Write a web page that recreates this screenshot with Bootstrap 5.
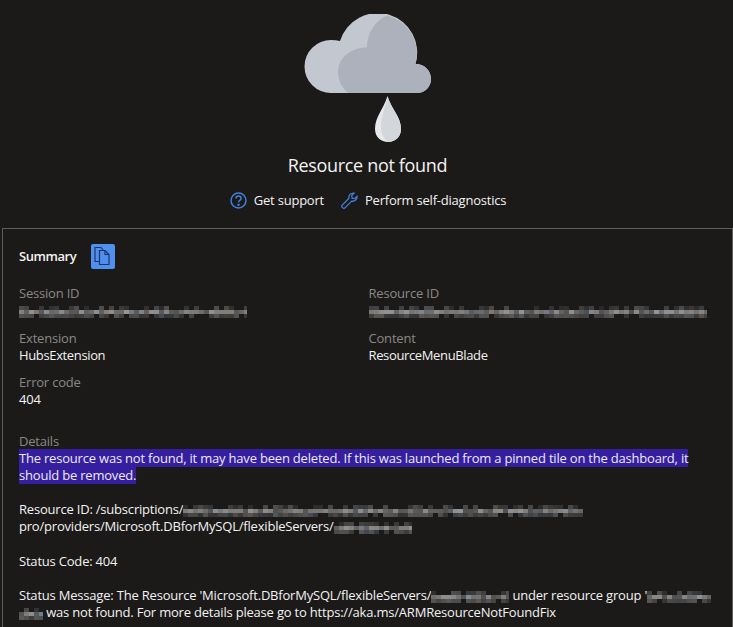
<!DOCTYPE html>
<html lang="en"><head><meta charset="utf-8"><title>Resource not found</title>
<link rel="stylesheet" href="https://cdn.jsdelivr.net/npm/bootstrap@5.3.0/dist/css/bootstrap.min.css">
<style>
html,body{height:627px;overflow:hidden}
body{background:#1b1a19;color:#f3f2f1;font-family:"Open Sans","Noto Sans",sans-serif;font-size:13px;line-height:17px;letter-spacing:-.2px}
.hero{height:228px;padding-top:14px}
.cloudicon{display:block;width:127px;height:128px;margin-left:2px}
.hero-title{font-size:18px;line-height:26px;font-weight:400;margin:10px 0 0 2px;letter-spacing:-.33px}
.hero-links{margin-top:14px;gap:17px;margin-left:3px;letter-spacing:-.22px}
.hero-links a{color:#f3f2f1;text-decoration:none;gap:7px}
.panel{border:1px solid #605e5c;margin-left:2px;padding:15px 16px 0;height:420px}
.sum-title{font-weight:600;letter-spacing:-.45px}
.copybtn{width:24px;height:25px;background:#4f8ff0;border:0;border-radius:2px;padding:0;margin-left:15px}
.lbl{color:#8a8886}
.pair{height:44.5px}
.val-narrow{letter-spacing:-.36px}
.mosaic{display:inline-block;vertical-align:middle}
.selbg{background:#351f9e;color:#eceaf6}
.colgap{width:349.5px;flex:none}
.detail-head{margin-top:14.5px}
p.msg{margin:0 0 17.4px}
</style></head><body>
<div class="hero d-flex flex-column align-items-center">
<svg class="cloudicon" viewBox="304 14 127 128" aria-label="cloud">
<path d="M331 93A26.500 26.500 0 0 1 331 40Q336 40 340 41A39 39 0 0 1 415.500 64A15 15 0 0 1 431 79A14 14 0 0 1 417 93Z" fill="#c3c7d0"/>
<path d="M348 93C342 88 338 80 338 72C338 58 351 47.500 367 47.500C367 33 375 21 387 15.500A39 39 0 0 1 415.500 64A15 15 0 0 1 431 79A14 14 0 0 1 417 93Z" fill="#adb1bc"/>
<path d="M387.500 96C383 110 375 117 375 129C375 137 381 142 388 142C395 142 401 137 401 129C401 117 392 110 387.500 96Z" fill="#e6e8ec"/>
<path d="M387.500 97C385 108 381 117 381 127C381 134 384 139 388 142C395 142 401 137 401 129C401 117 392 110 387.500 97Z" fill="#d3d6db"/>
</svg>
<h1 class="hero-title">Resource not found</h1>
<div class="hero-links d-flex">
<a href="#" class="d-flex align-items-center"><svg width="17" height="17" viewBox="0 0 17 17" fill="none" stroke="#3f80dc" stroke-width="1.500"><circle cx="8.500" cy="8.500" r="7.500"/><path d="M6 6.600c0-1.500 1.100-2.500 2.500-2.500s2.600 1 2.600 2.300c0 1.900-2.600 1.900-2.600 3.800"/><circle cx="8.500" cy="12.700" r=".5" fill="#3f80dc"/></svg>Get support</a>
<a href="#" class="d-flex align-items-center"><svg width="17" height="17" viewBox="0 0 17 17" fill="none" stroke="#3f80dc" stroke-width="1.300"><path d="M1 13.400 8 6.300C7.300 3.400 9.800.6 13 1.100L10.700 3.500l.4 2.600 2.600.5L16 4.300c.4 3-2.300 5.500-5.300 4.800l-7 7c-1.200 1-3.700-1.400-2.700-2.700Z"/></svg>Perform self-diagnostics</a>
</div>
</div>
<div class="panel">
<div class="d-flex align-items-center"><span class="sum-title">Summary</span>
<button class="copybtn" aria-label="Copy"><svg class="d-block" width="24" height="25" viewBox="0 0 24 25" fill="none" stroke="#1f3560" stroke-width="1.200"><path d="M8 17.500H4V3.500h6L12 6"/><path d="M8.500 6.500h5.500l4 4v10H8.500Z"/><path d="M14 6.500v4h4"/></svg></button></div>
<div class="d-flex mt-3">
<div class="colgap"><div class="pair"><div class="lbl">Session ID</div><span class="mosaic" data-w="228"></span></div>
<div class="pair"><div class="lbl">Extension</div><div class="val-narrow">HubsExtension</div></div>
<div class="pair"><div class="lbl">Error code</div><div>404</div></div></div>
<div class="flex-grow-1"><div class="pair"><div class="lbl">Resource ID</div><span class="mosaic" data-w="338"></span></div>
<div class="pair"><div class="lbl">Content</div><div class="val-narrow">ResourceMenuBlade</div></div></div>
</div>
<div class="lbl detail-head">Details</div>
<p class="msg"><span class="selbg">The resource was not found, it may have been deleted. If this was launched from a pinned tile on the dashboard, it should be removed.</span></p>
<p class="msg">Resource ID: /subscriptions/<span class="mosaic" data-w="400"></span><br>pro/providers/Microsoft.DBforMySQL/flexibleServers/<span class="mosaic" data-w="78"></span></p>
<p class="msg">Status Code: 404</p>
<p class="msg">Status Message: The Resource 'Microsoft.DBforMySQL/flexibleServers/<span class="mosaic" data-w="78"></span> under resource group '<span class="mosaic" data-w="64"></span><br><span class="mosaic" data-w="24"></span> was not found. For more details please go to https://aka.ms/ARMResourceNotFoundFix</p>
</div>
<script>
var seed=7;function r(){seed=(seed*16807)%2147483647;return seed/2147483647}
document.querySelectorAll('.mosaic').forEach(function(m){var w=+m.dataset.w,h=12,s='';for(var x=0;x<w;x+=5){for(var y=0;y<h;y+=4){var keep=y==4?1:(y==0?.55:.85);if(r()<keep){var b=y==4?78:(y==0?42:52),g=Math.round(b+r()*(y==4?70:36)),t=Math.round(r()*10-5);s+='<rect x="'+x+'" y="'+y+'" width="5" height="4" fill="rgb('+(g+t)+','+g+','+(g-t)+')"/>'}}}
m.innerHTML='<svg width="'+w+'" height="'+h+'" class="d-block" aria-hidden="true">'+s+'</svg>'});
</script>
<script src="https://cdn.jsdelivr.net/npm/bootstrap@5.3.0/dist/js/bootstrap.bundle.min.js"></script>
</body></html>
